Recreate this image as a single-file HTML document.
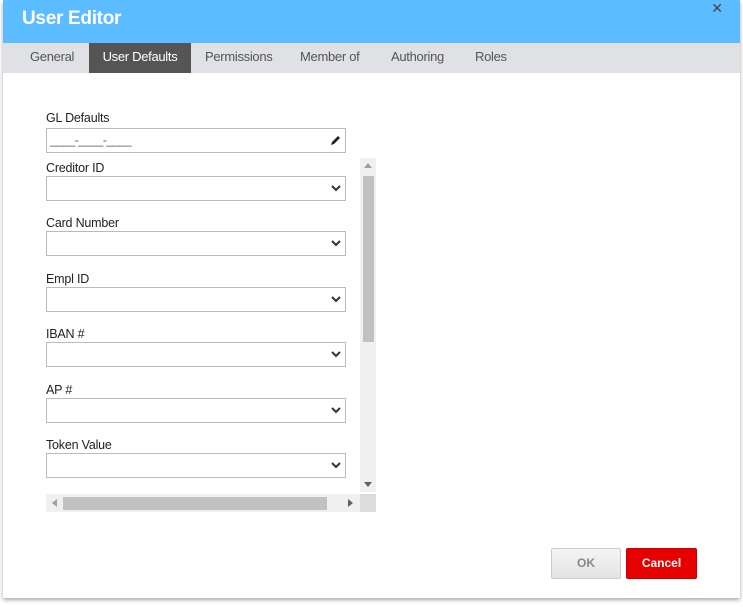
<!DOCTYPE html>
<html><head><style>
body{margin:0;width:743px;height:607px;background:#fff;font-family:"Liberation Sans",sans-serif;position:relative;overflow:hidden}
.dlg{position:absolute;left:3px;top:0;width:737px;height:598px;background:#fff;box-shadow:0 2px 4px rgba(0,0,0,.35)}
.hdr{position:absolute;left:0;top:0;width:737px;height:43px;background:#5bbcff}
.hdr .t{position:absolute;left:19px;top:8px;color:#fff;font-size:19px;font-weight:bold;letter-spacing:-0.3px}
.hdr .x{position:absolute;right:17px;top:0px;color:#444;font-size:14px}
.tabs{position:absolute;left:0;top:43px;width:737px;height:30px;background:#e0e1e5}
.tab{position:absolute;top:0;height:30px;line-height:28px;font-size:13px;color:#555;letter-spacing:-0.3px}
.tab.a{background:#555;color:#fff;text-align:center}
.lbl{position:absolute;left:43px;font-size:12.5px;color:#222;letter-spacing:-0.2px}
.inp{position:absolute;left:43px;width:298px;height:23px;border:1px solid #bbb;background:#fff}
.chev{position:absolute;right:4px;top:7px;width:10px;height:8px}
</style></head><body>
<div class="dlg">
<div class="hdr"><div class="t">User Editor</div><div class="x">✕</div></div>
<div class="tabs">
<div class="tab" style="left:27px">General</div>
<div class="tab a" style="left:86px;width:102px">User Defaults</div>
<div class="tab" style="left:202px">Permissions</div>
<div class="tab" style="left:297px">Member of</div>
<div class="tab" style="left:388px">Authoring</div>
<div class="tab" style="left:472px">Roles</div>
</div>
<div class="lbl" style="top:111px">GL Defaults</div>
<div class="inp" style="top:128px"><span style="position:absolute;left:3px;top:4px;font-size:12px;color:#555;letter-spacing:-0.5px">____-____-____</span>
<svg style="position:absolute;right:4px;top:6px" width="11" height="11" viewBox="0 0 11 11"><path d="M1 10 L2 7 L8 1 L10 3 L4 9 Z" fill="#222"/></svg></div>
<div style="position:absolute;left:357px;top:158px;width:16px;height:334px;background:#f0f0f0"><div style="position:absolute;left:3px;top:18px;width:11px;height:166px;background:#c1c1c1"></div>
<svg style="position:absolute;left:4px;top:5px" width="8" height="5"><path d="M0 5L4 0L8 5Z" fill="#a0a0a0"/></svg>
<svg style="position:absolute;left:4px;top:324px" width="8" height="5"><path d="M0 0L4 5L8 0Z" fill="#606060"/></svg></div>
<div style="position:absolute;left:43px;top:494px;width:314px;height:18px;background:#f0f0f0"><div style="position:absolute;left:17px;top:3px;width:264px;height:13px;background:#c1c1c1"></div>
<svg style="position:absolute;left:6px;top:5px" width="5" height="8"><path d="M5 0L0 4L5 8Z" fill="#a0a0a0"/></svg>
<svg style="position:absolute;left:302px;top:5px" width="5" height="8"><path d="M0 0L5 4L0 8Z" fill="#606060"/></svg></div>
<div style="position:absolute;left:357px;top:494px;width:16px;height:18px;background:#dcdcdc"></div>

<div class="lbl" style="top:161px">Creditor ID</div>
<div class="inp" style="top:176px"><svg class="chev" viewBox="0 0 10 8"><path d="M1 2L5 6L9 2" stroke="#333" stroke-width="2" fill="none"/></svg></div>
<div class="lbl" style="top:216px">Card Number</div>
<div class="inp" style="top:231px"><svg class="chev" viewBox="0 0 10 8"><path d="M1 2L5 6L9 2" stroke="#333" stroke-width="2" fill="none"/></svg></div>
<div class="lbl" style="top:272px">Empl ID</div>
<div class="inp" style="top:287px"><svg class="chev" viewBox="0 0 10 8"><path d="M1 2L5 6L9 2" stroke="#333" stroke-width="2" fill="none"/></svg></div>
<div class="lbl" style="top:327px">IBAN #</div>
<div class="inp" style="top:342px"><svg class="chev" viewBox="0 0 10 8"><path d="M1 2L5 6L9 2" stroke="#333" stroke-width="2" fill="none"/></svg></div>
<div class="lbl" style="top:383px">AP #</div>
<div class="inp" style="top:398px"><svg class="chev" viewBox="0 0 10 8"><path d="M1 2L5 6L9 2" stroke="#333" stroke-width="2" fill="none"/></svg></div>
<div class="lbl" style="top:438px">Token Value</div>
<div class="inp" style="top:453px"><svg class="chev" viewBox="0 0 10 8"><path d="M1 2L5 6L9 2" stroke="#333" stroke-width="2" fill="none"/></svg></div>

<div style="position:absolute;left:548px;top:548px;width:68px;height:29px;border:1px solid #ccc;background:linear-gradient(#f4f4f4,#e4e4e4);color:#888;font-weight:bold;font-size:12px;text-align:center;line-height:28px;border-radius:2px">OK</div>
<div style="position:absolute;left:623px;top:548px;width:69px;height:29px;border:1px solid #c00;background:#e60000;color:#fff;font-weight:bold;font-size:12px;text-align:center;line-height:28px;border-radius:2px">Cancel</div>
</div>
</body></html>
